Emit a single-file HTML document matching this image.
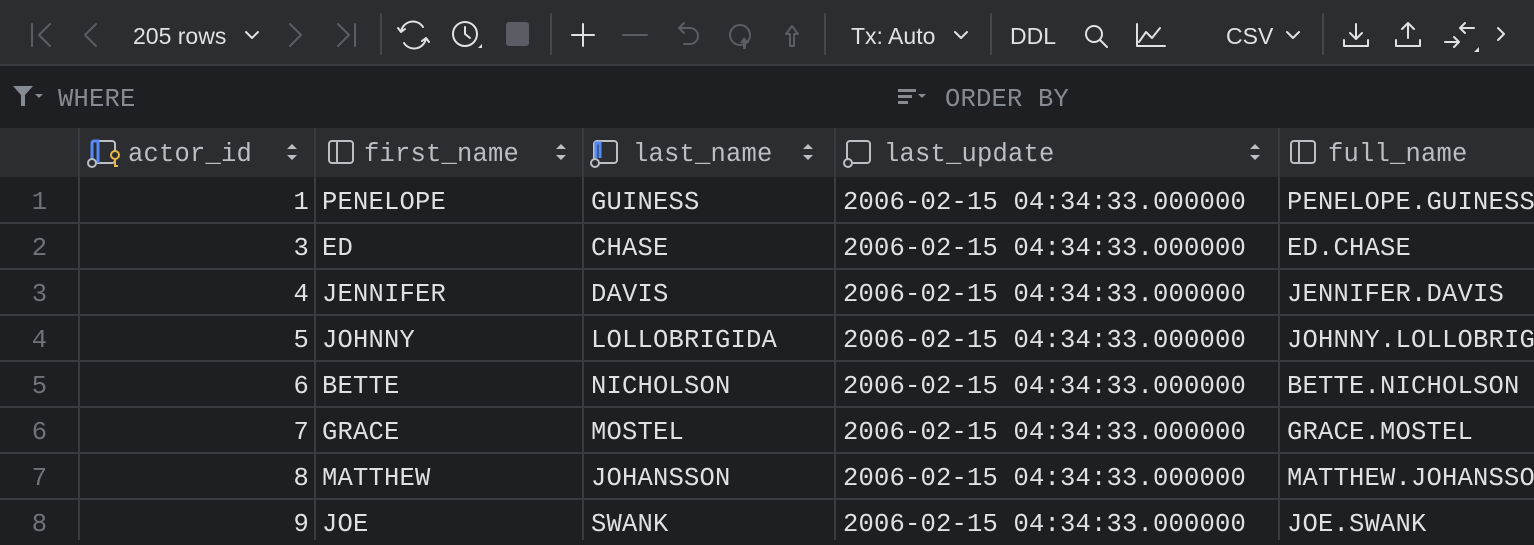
<!DOCTYPE html>
<html><head><meta charset="utf-8"><style>
*{margin:0;padding:0;box-sizing:border-box}
body{width:1534px;height:540px;overflow:hidden;background:#1e1f22;position:relative;font-family:"Liberation Sans",sans-serif}
.tb{position:absolute;left:0;top:0;width:1534px;height:66px;background:#2b2d30;border-bottom:2px solid #393b40}
.t{position:absolute;top:21px;font-size:23px;color:#dfe1e5;line-height:30px}
.fb{position:absolute;top:68px;left:0;width:1534px;height:60px;background:#1e1f22}
.mono{font-family:"Liberation Mono",monospace;font-size:25.5px;letter-spacing:0.2px}
.hd{position:absolute;top:128px;left:0;width:1534px;height:49px;background:#2b2d30}
.c{position:absolute;height:46px;line-height:52px;color:#dfe1e5;white-space:nowrap;overflow:hidden}
.vl{position:absolute;top:128px;width:2px;height:412px;background:#393b40}
.hl{position:absolute;left:0;width:1534px;height:2px;background:#393b40}
.rn{color:#6f737a;text-align:center;width:79px;left:0}
.hdt{position:absolute;top:128px;height:49px;line-height:53px;color:#bcbec4;white-space:nowrap}
</style></head><body>
<div class="tb">
<svg width="1534" height="66" style="position:absolute;left:0;top:0" fill="none" stroke-width="2" stroke-linecap="round" stroke-linejoin="round">
<g stroke="#5a5d63"><path d="M32 24v22M50 24l-11 11 11 11"/><path d="M96 24l-11 11 11 11"/><path d="M290 24l11 11-11 11"/><path d="M338 24l11 11-11 11M355 24v22"/></g>
<path d="M246 32l6 6 6-6" stroke="#dfe1e5"/>
<g stroke="#45474c"><path d="M381 14v40M551 14v40M825 14v40M991 14v40M1323 14v40"/></g>
<g stroke="#dfe1e5">
<path d="M401 32a12 12 0 0 1 22-5M426 38a12 12 0 0 1-22 5M398 28l3 4 4-3M429 42l-3-4-4 3"/>
<circle cx="465" cy="34" r="12"/><path d="M465 27v7l5 4"/>
<path d="M583 24v22M572 35h22"/>
<path d="M1086 34a8 8 0 1 0 16 0a8 8 0 1 0-16 0M1100 40l7 7"/>
<path d="M1137 24v22h28M1139 42l7-10 6 6 8-10"/>
<path d="M1356 24v15M1350 33l6 6 6-6M1344 40v6h24v-6"/>
<path d="M1408 38v-15M1402 29l6-6 6 6M1396 40v6h24v-6"/>
<path d="M1460 28h14M1465 23l-5 5 5 5M1445 42h14M1454 37l5 5-5 5"/>
<path d="M1498 28l6 6-6 6"/>
<path d="M955 32l6 6 6-6M1287 32l6 6 6-6"/>
</g>
<path d="M478 48l4-4v4z" fill="#dfe1e5"/><path d="M1474 52l5-5v5z" fill="#dfe1e5"/>
<rect x="506" y="22" width="23" height="24" rx="3" fill="#5a5d63" stroke="none"/>
<g stroke="#5a5d63"><path d="M623 35h24"/><path d="M680 28h10a8 8 0 0 1 0 16h-6M684 23l-5 5 5 5"/>
<circle cx="740" cy="35" r="10"/><path d="M786 34l6-8 6 8h-4v12h-4v-12z"/></g>
<path d="M744 37l-4 6h3v6h3v-6h3z" fill="#5a5d63"/>
</svg>
<div class="t" style="left:133px">205 rows</div>
<div class="t" style="left:851px">Tx: Auto</div>
<div class="t" style="left:1010px">DDL</div>
<div class="t" style="left:1226px">CSV</div>
</div>
<div class="fb">
<svg width="40" height="40" style="position:absolute;left:10px;top:12px"><path d="M3 6h20l-8 9v11h-4v-11z" fill="#868a91"/><path d="M25 14h8l-4 4z" fill="#868a91"/></svg>
<div class="mono" style="position:absolute;left:58px;top:17px;color:#868a91">WHERE</div>
<svg width="40" height="40" style="position:absolute;left:896px;top:12px" fill="#868a91"><rect x="2" y="9" width="18" height="3"/><rect x="2" y="15" width="14" height="3"/><rect x="2" y="21" width="10" height="3"/><path d="M22 14h8l-4 4z"/></svg>
<div class="mono" style="position:absolute;left:945px;top:17px;color:#868a91">ORDER BY</div>
</div>
<div class="hd"></div>
<svg width="1534" height="49" style="position:absolute;left:0;top:128px" fill="none" stroke-width="2">
<g stroke="#bcbec4"><rect x="92" y="13" width="23" height="22" rx="3"/><rect x="329" y="13" width="24" height="22" rx="3"/><path d="M337 13v22"/><rect x="594" y="13" width="23" height="22" rx="3"/><rect x="847" y="13" width="23" height="22" rx="3"/><rect x="1291" y="13" width="24" height="22" rx="3"/><path d="M1299 13v22"/></g>
<path d="M92 35V15a2 2 0 0 1 2-2h4v22" stroke="#548af7" stroke-width="3"/>
<path d="M596 30V15h4v15" stroke="#548af7" stroke-width="3"/>
<circle cx="92" cy="35" r="4" fill="#2b2d30" stroke="#bcbec4"/><circle cx="595" cy="35" r="4" fill="#2b2d30" stroke="#bcbec4"/><circle cx="848" cy="35" r="4" fill="#2b2d30" stroke="#bcbec4"/>
<circle cx="115" cy="27" r="4" fill="#2b2d30" stroke="#e8b84a"/><path d="M115 31v7h3" stroke="#e8b84a"/>
<g fill="#bcbec4"><path d="M287 21l5-5 5 5zM287 27l5 5 5-5z"/><path d="M556 21l5-5 5 5zM556 27l5 5 5-5z"/><path d="M803 21l5-5 5 5zM803 27l5 5 5-5z"/><path d="M1250 21l5-5 5 5zM1250 27l5 5 5-5z"/></g>
</svg>
<div class="hdt mono" style="left:128px">actor_id</div>
<div class="hdt mono" style="left:364px">first_name</div>
<div class="hdt mono" style="left:633px">last_name</div>
<div class="hdt mono" style="left:884px">last_update</div>
<div class="hdt mono" style="left:1328px">full_name</div>
<div class="vl" style="left:78px"></div><div class="vl" style="left:314px"></div><div class="vl" style="left:582px"></div><div class="vl" style="left:834px"></div><div class="vl" style="left:1278px"></div>
<div class="hl" style="top:222px"></div><div class="hl" style="top:268px"></div><div class="hl" style="top:314px"></div><div class="hl" style="top:360px"></div><div class="hl" style="top:406px"></div><div class="hl" style="top:452px"></div><div class="hl" style="top:498px"></div>
<div class="mono">
<div class="c rn" style="top:177px">1</div><div class="c" style="top:177px;left:80px;width:229px;text-align:right">1</div><div class="c" style="top:177px;left:322px">PENELOPE</div><div class="c" style="top:177px;left:591px">GUINESS</div><div class="c" style="top:177px;left:843px">2006-02-15 04:34:33.000000</div><div class="c" style="top:177px;left:1287px">PENELOPE.GUINESS</div>
<div class="c rn" style="top:223px">2</div><div class="c" style="top:223px;left:80px;width:229px;text-align:right">3</div><div class="c" style="top:223px;left:322px">ED</div><div class="c" style="top:223px;left:591px">CHASE</div><div class="c" style="top:223px;left:843px">2006-02-15 04:34:33.000000</div><div class="c" style="top:223px;left:1287px">ED.CHASE</div>
<div class="c rn" style="top:269px">3</div><div class="c" style="top:269px;left:80px;width:229px;text-align:right">4</div><div class="c" style="top:269px;left:322px">JENNIFER</div><div class="c" style="top:269px;left:591px">DAVIS</div><div class="c" style="top:269px;left:843px">2006-02-15 04:34:33.000000</div><div class="c" style="top:269px;left:1287px">JENNIFER.DAVIS</div>
<div class="c rn" style="top:315px">4</div><div class="c" style="top:315px;left:80px;width:229px;text-align:right">5</div><div class="c" style="top:315px;left:322px">JOHNNY</div><div class="c" style="top:315px;left:591px">LOLLOBRIGIDA</div><div class="c" style="top:315px;left:843px">2006-02-15 04:34:33.000000</div><div class="c" style="top:315px;left:1287px">JOHNNY.LOLLOBRIGIDA</div>
<div class="c rn" style="top:361px">5</div><div class="c" style="top:361px;left:80px;width:229px;text-align:right">6</div><div class="c" style="top:361px;left:322px">BETTE</div><div class="c" style="top:361px;left:591px">NICHOLSON</div><div class="c" style="top:361px;left:843px">2006-02-15 04:34:33.000000</div><div class="c" style="top:361px;left:1287px">BETTE.NICHOLSON</div>
<div class="c rn" style="top:407px">6</div><div class="c" style="top:407px;left:80px;width:229px;text-align:right">7</div><div class="c" style="top:407px;left:322px">GRACE</div><div class="c" style="top:407px;left:591px">MOSTEL</div><div class="c" style="top:407px;left:843px">2006-02-15 04:34:33.000000</div><div class="c" style="top:407px;left:1287px">GRACE.MOSTEL</div>
<div class="c rn" style="top:453px">7</div><div class="c" style="top:453px;left:80px;width:229px;text-align:right">8</div><div class="c" style="top:453px;left:322px">MATTHEW</div><div class="c" style="top:453px;left:591px">JOHANSSON</div><div class="c" style="top:453px;left:843px">2006-02-15 04:34:33.000000</div><div class="c" style="top:453px;left:1287px">MATTHEW.JOHANSSON</div>
<div class="c rn" style="top:499px">8</div><div class="c" style="top:499px;left:80px;width:229px;text-align:right">9</div><div class="c" style="top:499px;left:322px">JOE</div><div class="c" style="top:499px;left:591px">SWANK</div><div class="c" style="top:499px;left:843px">2006-02-15 04:34:33.000000</div><div class="c" style="top:499px;left:1287px">JOE.SWANK</div>
</div>
</body></html>
